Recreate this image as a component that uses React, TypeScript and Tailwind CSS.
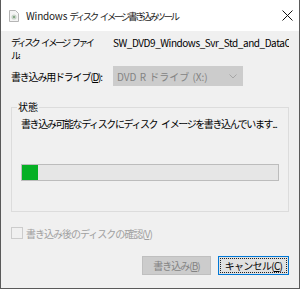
import React from "react";

function FileIcon() {
  return (
    <svg width="10" height="12" viewBox="0 0 10 12" className="block">
      <path d="M0.5 0.5h6l3 3v8h-9z" fill="#f4f4f4" stroke="#b5b5b5" />
      <circle cx="5" cy="7" r="2.6" fill="#c9d3c9" />
      <circle cx="5" cy="7" r="1" fill="#6e9a6e" />
    </svg>
  );
}

function CloseIcon() {
  return (
    <svg width="11" height="11" viewBox="0 0 11 11" className="block">
      <path d="M0.5 0.5l10 10M10.5 0.5l-10 10" stroke="#111" strokeWidth="1" />
    </svg>
  );
}

export default function App() {
  return (
    <div className="w-[300px] h-[289px] bg-[#f0f0f0] border-x border-b border-[#5a5a5a] flex flex-col text-[10px] leading-[13px] text-black font-['Noto_Sans_CJK_JP',sans-serif] overflow-hidden">
      {/* Title bar */}
      <div className="h-[31px] bg-white flex items-center pl-[8px] pr-[6px] shrink-0">
        <FileIcon />
        <span className="ml-[7px] text-[10px] text-[#1a1a1a] whitespace-nowrap">
          <span className="tracking-[-0.2px]">Windows </span>
          <span className="text-[9.5px] tracking-[-2.4px] [word-spacing:3px]">ディスク イメージ書き込みツール</span>
        </span>
        <div className="ml-auto shrink-0">
          <CloseIcon />
        </div>
      </div>

      {/* Body */}
      <div className="pl-[10px] pr-[10px] flex flex-col">
        <div className="flex mt-[5px]">
          <div className="w-[102px] shrink-0 whitespace-nowrap text-[9.5px] tracking-[-2.5px] [word-spacing:3px]">
            ディスク イメージ ファイ
            <br />
            ル:
          </div>
          <div className="w-[177px] overflow-hidden whitespace-nowrap tracking-[-0.45px]">
            SW_DVD9_Windows_Svr_Std_and_DataCenter_2016_64Bit_Japanese.ISO
          </div>
        </div>

        <div className="flex items-center mt-[4px] h-[20px]">
          <div className="w-[102px] shrink-0 whitespace-nowrap tracking-[-1.2px]">
            書き込み用ドライブ(<span className="underline">D</span>):
          </div>
          <div className="w-[130px] h-[20px] bg-[#cccccc] border border-[#cccccc] flex items-center pl-[3px] pr-[4px] text-[#838383] whitespace-nowrap [word-spacing:1px]">
            <span>DVD R ドライブ (X:)</span>
            <svg width="8" height="5" viewBox="0 0 8 5" className="ml-auto mr-[1px]">
              <path d="M0.5 0.5l3.5 3.5 3.5-3.5" fill="none" stroke="#a6a6a6" />
            </svg>
          </div>
        </div>

        {/* Status group */}
        <div className="relative mt-[21px] border border-[#dcdcdc] px-[9px] pt-[9px] pb-[30px]">
          <span className="absolute -top-[8px] left-[5px] bg-[#f0f0f0] px-[1px] leading-[14px]">状態</span>
          <div className="leading-[14px] whitespace-nowrap tracking-[-1.4px] [word-spacing:3px]">
            書き込み可能なディスクにディスク イメージを書き込んでいます...
          </div>
          <div className="mt-[33px] h-[17px] border border-[#bcbcbc] bg-[#e6e6e6]">
            <div className="h-full w-[16px] bg-[#06b025]" />
          </div>
        </div>

        <div className="flex items-center mt-[14px] h-[14px] text-[#a0a0a0]">
          <div className="w-[12px] h-[12px] border border-[#cccccc] bg-[#f0f0f0]" />
          <span className="ml-[3px] whitespace-nowrap tracking-[-1px]">
            書き込み後のディスクの確認(<span className="underline">V</span>)
          </span>
        </div>

        <div className="flex justify-end gap-[7px] mt-[16px]">
          <div className="w-[69px] h-[19px] bg-[#cccccc] border border-[#bfbfbf] flex items-center justify-center text-[#838383] whitespace-nowrap tracking-[-1px]">
            書き込み(<span className="underline">B</span>)
          </div>
          <div className="w-[71px] h-[19px] bg-[#e1e1e1] border border-[#0078d7] p-[1px]">
            <div className="w-full h-full border border-dotted border-[#222] flex items-center justify-center whitespace-nowrap tracking-[-0.7px]">
              キャンセル(<span className="underline">C</span>)
            </div>
          </div>
        </div>
      </div>
    </div>
  );
}
